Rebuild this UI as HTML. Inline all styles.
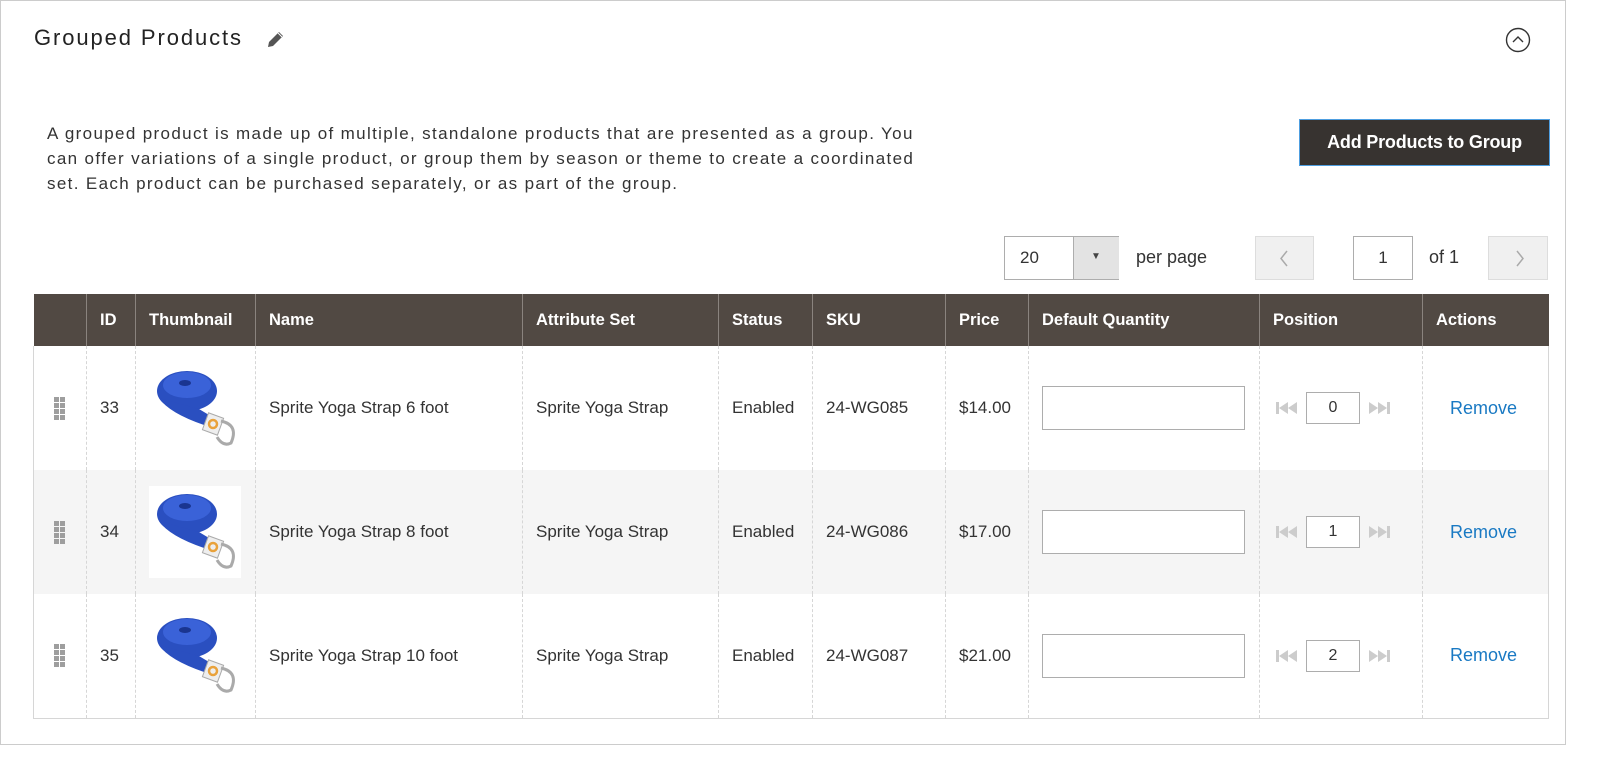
<!DOCTYPE html>
<html><head><meta charset="utf-8"><style>
*{box-sizing:border-box;margin:0;padding:0}
body{width:1600px;height:760px;background:#fff;font-family:"Liberation Sans",sans-serif;color:#303030;position:relative;overflow:hidden}
.frame{position:absolute;left:0;top:0;width:1566px;height:745px;border:1px solid #ccc}
.abs{position:absolute}
h1{position:absolute;left:34px;top:25px;font-size:22px;font-weight:normal;color:#222;letter-spacing:1.9px}
.desc{position:absolute;left:47px;top:121px;font-size:17px;line-height:25px;color:#333;white-space:nowrap;letter-spacing:1.35px}
.btn{position:absolute;left:1299px;top:119px;width:251px;height:47px;background:#373330;border:1px solid #4e9ee0;color:#fff;font-weight:bold;font-size:18px;text-align:center;line-height:45px;letter-spacing:-.2px}
.box{position:absolute;border:1px solid #adadad;background:#fff;font-size:17px;color:#333}
table{position:absolute;left:33px;top:294px;width:1516px;border-collapse:collapse;font-size:17px}
th{background:#514943;color:#fff;height:52px;text-align:left;padding-left:13px;font-weight:bold;font-size:16.5px;border-left:1px solid #8a837e}
th:first-child{border-left:none}
td{height:124px;border-left:1px dashed #d6d6d6;padding-left:13px;color:#333;vertical-align:middle}
td:first-child{border-left:1px solid #d6d6d6}
td:last-child{border-right:1px solid #d6d6d6}
tr.alt td{background:#f5f5f5}
tr:last-child td{border-bottom:1px solid #d6d6d6}
.qty{width:203px;height:44px;border:1px solid #adadad;background:#fff}
.pos{display:flex;align-items:center;gap:8px;padding-left:3px}
.pos span.b{width:54px;height:32px;border:1px solid #adadad;background:#fff;text-align:center;line-height:30px;color:#333;font-size:16px}
a{color:#1979c3;text-decoration:none;font-size:18px}
.grip{display:grid;grid-template-columns:5px 5px;gap:1px;width:11px}
.grip i{width:5px;height:5px;background:#9e9e9e;display:block}
</style></head><body>
<div class="frame"></div>
<h1>Grouped Products</h1>
<svg class="abs" style="left:266px;top:29px" width="20" height="20" viewBox="0 0 20 20"><path d="M2 18 L3 13 L13 3 L17 7 L7 17 Z" fill="#555"/><path d="M12 4 L16 8" stroke="#fff" stroke-width="1"/></svg>
<svg class="abs" style="left:1505px;top:27px" width="26" height="26" viewBox="0 0 26 26"><circle cx="13" cy="13" r="11.5" fill="none" stroke="#333" stroke-width="1.4"/><path d="M8 15 L13 10 L18 15" fill="none" stroke="#333" stroke-width="1.4"/></svg>
<div class="desc">A grouped product is made up of multiple, standalone products that are presented as a group. You<br>can offer variations of a single product, or group them by season or theme to create a coordinated<br>set. Each product can be purchased separately, or as part of the group.</div>
<div class="btn">Add Products to Group</div>
<div class="box" style="left:1004px;top:236px;width:115px;height:44px"><span style="position:absolute;left:15px;top:11px">20</span><div style="position:absolute;left:68px;top:0;width:46px;height:42px;background:#e3e3e3;border-left:1px solid #adadad"><span style="position:absolute;left:17px;top:14px;font-size:10px;color:#444">▼</span></div></div>
<div class="abs" style="left:1136px;top:247px;font-size:18px;color:#333">per page</div>
<div class="box" style="left:1255px;top:236px;width:59px;height:44px;background:#f0f0f0;border-color:#ddd"><svg style="position:absolute;left:23px;top:13px" width="10" height="17"><path d="M8 1 L2 8.5 L8 16" fill="none" stroke="#aaa" stroke-width="1.5"/></svg></div>
<div class="box" style="left:1353px;top:236px;width:60px;height:44px;text-align:center;line-height:42px">1</div>
<div class="abs" style="left:1429px;top:247px;font-size:18px;color:#333">of 1</div>
<div class="box" style="left:1488px;top:236px;width:60px;height:44px;background:#f0f0f0;border-color:#ddd"><svg style="position:absolute;left:26px;top:13px" width="10" height="17"><path d="M2 1 L8 8.5 L2 16" fill="none" stroke="#aaa" stroke-width="1.5"/></svg></div>
<table>
<tr><th style="width:53px"></th><th style="width:49px">ID</th><th style="width:120px">Thumbnail</th><th style="width:267px">Name</th><th style="width:196px">Attribute Set</th><th style="width:94px">Status</th><th style="width:133px">SKU</th><th style="width:83px">Price</th><th style="width:231px">Default Quantity</th><th style="width:163px">Position</th><th>Actions</th></tr>
<tr><td style="padding-left:20px"><div class="grip"><i></i><i></i><i></i><i></i><i></i><i></i><i></i><i></i></div></td><td>33</td><td><svg width="92" height="86" viewBox="0 0 92 86"><ellipse cx="38" cy="28" rx="30" ry="20" fill="#2a4fc0"/><ellipse cx="38" cy="22" rx="24" ry="13" fill="#3a62d8"/><ellipse cx="36" cy="20" rx="6" ry="3" fill="#1a3590"/><path d="M10 35 Q20 50 55 62 L65 68 L70 58 L50 46 Z" fill="#2a4fc0"/><rect x="56" y="52" width="16" height="18" fill="#eee" stroke="#aaa" transform="rotate(20 64 61)"/><circle cx="64" cy="61" r="4" fill="none" stroke="#e9a23b" stroke-width="2.5"/><path d="M72 58 Q90 62 82 80 Q74 84 68 74" fill="none" stroke="#aaa" stroke-width="3"/></svg></td><td>Sprite Yoga Strap 6 foot</td><td>Sprite Yoga Strap</td><td>Enabled</td><td>24-WG085</td><td>$14.00</td><td><div class="qty"></div></td><td><div class="pos"><svg width="22" height="14" viewBox="0 0 22 14"><rect x="0" y="1" width="3" height="12" fill="#ccc"/><path d="M12 1 L3 7 L12 13Z M21 1 L12 7 L21 13Z" fill="#ccc"/></svg><span class="b">0</span><svg width="22" height="14" viewBox="0 0 22 14"><path d="M1 1 L10 7 L1 13Z M10 1 L19 7 L10 13Z" fill="#ccc"/><rect x="19" y="1" width="3" height="12" fill="#ccc"/></svg></div></td><td style="padding-left:27px"><a>Remove</a></td></tr>
<tr class="alt"><td style="padding-left:20px"><div class="grip"><i></i><i></i><i></i><i></i><i></i><i></i><i></i><i></i></div></td><td>34</td><td><div style="width:92px;height:92px;background:#fff"><svg width="92" height="86" viewBox="0 0 92 86"><ellipse cx="38" cy="28" rx="30" ry="20" fill="#2a4fc0"/><ellipse cx="38" cy="22" rx="24" ry="13" fill="#3a62d8"/><ellipse cx="36" cy="20" rx="6" ry="3" fill="#1a3590"/><path d="M10 35 Q20 50 55 62 L65 68 L70 58 L50 46 Z" fill="#2a4fc0"/><rect x="56" y="52" width="16" height="18" fill="#eee" stroke="#aaa" transform="rotate(20 64 61)"/><circle cx="64" cy="61" r="4" fill="none" stroke="#e9a23b" stroke-width="2.5"/><path d="M72 58 Q90 62 82 80 Q74 84 68 74" fill="none" stroke="#aaa" stroke-width="3"/></svg></div></td><td>Sprite Yoga Strap 8 foot</td><td>Sprite Yoga Strap</td><td>Enabled</td><td>24-WG086</td><td>$17.00</td><td><div class="qty"></div></td><td><div class="pos"><svg width="22" height="14" viewBox="0 0 22 14"><rect x="0" y="1" width="3" height="12" fill="#ccc"/><path d="M12 1 L3 7 L12 13Z M21 1 L12 7 L21 13Z" fill="#ccc"/></svg><span class="b">1</span><svg width="22" height="14" viewBox="0 0 22 14"><path d="M1 1 L10 7 L1 13Z M10 1 L19 7 L10 13Z" fill="#ccc"/><rect x="19" y="1" width="3" height="12" fill="#ccc"/></svg></div></td><td style="padding-left:27px"><a>Remove</a></td></tr>
<tr><td style="padding-left:20px"><div class="grip"><i></i><i></i><i></i><i></i><i></i><i></i><i></i><i></i></div></td><td>35</td><td><svg width="92" height="86" viewBox="0 0 92 86"><ellipse cx="38" cy="28" rx="30" ry="20" fill="#2a4fc0"/><ellipse cx="38" cy="22" rx="24" ry="13" fill="#3a62d8"/><ellipse cx="36" cy="20" rx="6" ry="3" fill="#1a3590"/><path d="M10 35 Q20 50 55 62 L65 68 L70 58 L50 46 Z" fill="#2a4fc0"/><rect x="56" y="52" width="16" height="18" fill="#eee" stroke="#aaa" transform="rotate(20 64 61)"/><circle cx="64" cy="61" r="4" fill="none" stroke="#e9a23b" stroke-width="2.5"/><path d="M72 58 Q90 62 82 80 Q74 84 68 74" fill="none" stroke="#aaa" stroke-width="3"/></svg></td><td>Sprite Yoga Strap 10 foot</td><td>Sprite Yoga Strap</td><td>Enabled</td><td>24-WG087</td><td>$21.00</td><td><div class="qty"></div></td><td><div class="pos"><svg width="22" height="14" viewBox="0 0 22 14"><rect x="0" y="1" width="3" height="12" fill="#ccc"/><path d="M12 1 L3 7 L12 13Z M21 1 L12 7 L21 13Z" fill="#ccc"/></svg><span class="b">2</span><svg width="22" height="14" viewBox="0 0 22 14"><path d="M1 1 L10 7 L1 13Z M10 1 L19 7 L10 13Z" fill="#ccc"/><rect x="19" y="1" width="3" height="12" fill="#ccc"/></svg></div></td><td style="padding-left:27px"><a>Remove</a></td></tr>
</table>
</body></html>
